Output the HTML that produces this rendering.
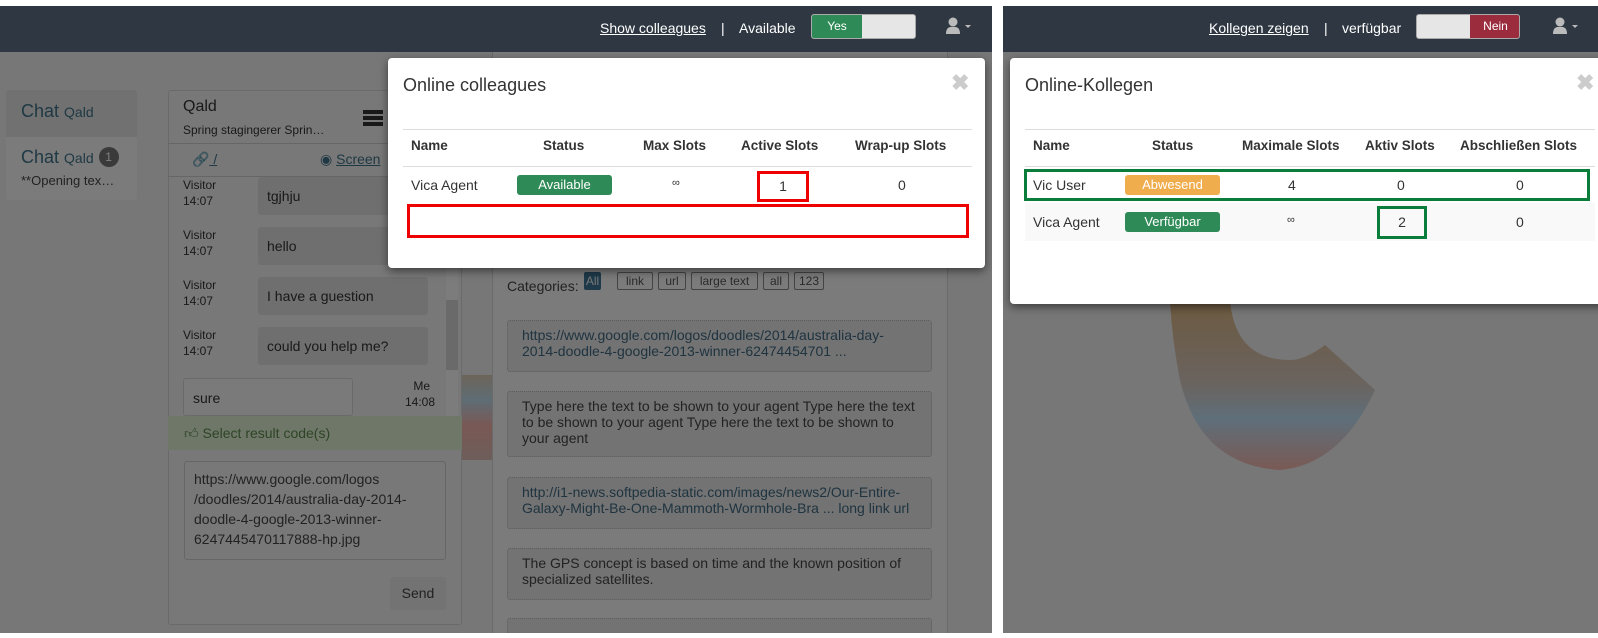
<!DOCTYPE html>
<html><head><meta charset="utf-8"><style>
*{box-sizing:border-box;margin:0;padding:0}
body{width:1598px;height:638px;overflow:hidden;background:#fff;font-family:"Liberation Sans",Arial,sans-serif;font-size:14px;color:#222;position:relative}
.a{position:absolute}
.bar{background:#2e3742;height:46px;top:6px}
.nav{color:#fff;font-size:14px;top:20px}
.nav u{text-decoration:underline}
.pg{background:#eeeeee;top:52px;height:581px;overflow:hidden}
.backdrop{background:rgba(0,0,0,.5);top:52px;height:581px}
.modal{background:#fff;border-radius:4px;box-shadow:0 3px 9px rgba(0,0,0,.5)}
.th{font-weight:bold;font-size:13.5px;color:#333;top:138px}
.td{font-size:14px;color:#333}
.badge{color:#fff;font-size:13px;text-align:center;border-radius:3px;height:20px;line-height:20px}
.lbl{font-size:12px;color:#333;line-height:16px}
.bub{background:#dedede;border-radius:3px;color:#333;font-size:14px;padding-left:9px;line-height:38px;height:38px}
.card{background:#e6e6e6;border:1px dotted #bbb;border-radius:3px;padding:6px 14px;font-size:14px;line-height:16px;left:507px;width:425px;color:#444}
.pill{border:1px solid #888;border-radius:2px;font-size:12px;color:#555;height:18px;line-height:16px;top:220px;text-align:center}
</style></head><body>
<div class="a bar" style="left:0;width:992px"></div>
<div class="a nav" style="left:600px"><u>Show colleagues</u></div>
<div class="a nav" style="left:721px">|</div>
<div class="a nav" style="left:739px">Available</div>
<div class="a" style="left:811px;top:14px;width:105px;height:25px;border-radius:3px;background:#e6e6e6;border:1px solid #aaa;overflow:hidden"><div style="width:50px;height:100%;background:#2e8b57;color:#fff;font-size:12px;text-align:center;line-height:22px">Yes</div></div>
<svg class="a" style="left:944px;top:16px" width="30" height="20"><circle cx="9" cy="6" r="4.5" fill="#bbb"/><path d="M2 18 Q2 10 9 11 Q16 10 16 18Z" fill="#bbb"/><path d="M21 9 L27 9 L24 12Z" fill="#bbb"/></svg>
<div class="a pg" style="left:0;width:992px">
<div class="a" style="left:6px;top:38px;width:131px;height:47px;background:#e2e2e2;border-radius:3px 3px 0 0"></div>
<div class="a" style="left:6px;top:85px;width:131px;height:63px;background:#f6f6f6;border-radius:0 0 3px 3px"></div>
<div class="a" style="left:21px;top:49px;font-size:18px;color:#3e7288">Chat <span style="font-size:14px">Qald</span></div>
<div class="a" style="left:21px;top:95px;font-size:18px;color:#3e7288">Chat <span style="font-size:14px">Qald</span> <span style="display:inline-block;width:20px;height:20px;border-radius:10px;background:#747474;color:#fff;font-size:12px;text-align:center;line-height:20px;vertical-align:2px">1</span></div>
<div class="a" style="left:21px;top:121px;font-size:13px;color:#444">**Opening tex…</div>
<div class="a" style="left:168px;top:38px;width:294px;height:535px;background:#f0f0f0;border:1px solid #d4d4d4;border-radius:3px"></div>
<div class="a" style="left:168px;top:91px;width:294px;height:1px;background:#ccc"></div>
<div class="a" style="left:168px;top:124px;width:294px;height:1px;background:#ccc"></div>
<div class="a" style="left:183px;top:46px;font-size:16px;color:#333">Qald</div>
<div class="a" style="left:183px;top:71px;font-size:12px;color:#333">Spring stagingerer Sprin…</div>
<div class="a" style="left:363px;top:58px;width:20px;height:16px;border-top:4px solid #333;border-bottom:4px solid #333"></div>
<div class="a" style="left:363px;top:64px;width:20px;height:4px;background:#333"></div>
<div class="a" style="left:192px;top:99px;font-size:14px;color:#3e7288">&#128279;<u> /</u></div>
<div class="a" style="left:320px;top:99px;font-size:14px;color:#3e7288">◉ <u>Screen</u></div>
<div class="a lbl" style="left:183px;top:125px">Visitor<br>14:07</div><div class="a bub" style="left:258px;top:125px;width:170px">tgjhju</div>
<div class="a lbl" style="left:183px;top:175px">Visitor<br>14:07</div><div class="a bub" style="left:258px;top:175px;width:170px">hello</div>
<div class="a lbl" style="left:183px;top:225px">Visitor<br>14:07</div><div class="a bub" style="left:258px;top:225px;width:170px">I have a guestion</div>
<div class="a lbl" style="left:183px;top:275px">Visitor<br>14:07</div><div class="a bub" style="left:258px;top:275px;width:170px">could you help me?</div>
<div class="a bub" style="left:183px;top:326px;width:170px;background:#f4f4f4;border:1px solid #d4d4d4">sure</div>
<div class="a lbl" style="left:405px;top:326px;text-align:right;width:25px">Me<br>14:08</div>
<div class="a" style="left:446px;top:125px;width:12px;height:240px;background:#f8f8f8"></div>
<div class="a" style="left:446px;top:248px;width:12px;height:70px;background:#d4d4d4"></div>
<div class="a" style="left:168px;top:364px;width:294px;height:34px;background:#dfeed3"></div>
<div class="a" style="left:184px;top:373px;font-size:14px;color:#5a8a4a">👍︎ Select result code(s)</div>
<div class="a" style="left:184px;top:409px;width:262px;height:99px;border:1px solid #ccc;border-radius:3px;background:#f0f0f0;padding:7px 9px;font-size:14px;line-height:20px;color:#444">https://www.google.com/logos /doodles/2014/australia-day-2014-doodle-4-google-2013-winner-6247445470117888-hp.jpg</div>
<div class="a" style="left:390px;top:525px;width:56px;height:33px;background:#e6e6e6;border-radius:3px;font-size:14px;line-height:33px;text-align:center;color:#444">Send</div>
<div class="a" style="left:462px;top:323px;width:30px;height:85px;background:linear-gradient(#dacab4,#bcdaea 30%,#f4b0aa 60%,#dabcb4)"></div>
<div class="a" style="left:492px;top:0;width:456px;height:581px;background:#f6f6f6;border-left:1px solid #d4d4d4;border-right:1px solid #d4d4d4"></div>
<div class="a" style="left:507px;top:226px;font-size:14px;color:#444">Categories:</div>
<div class="a pill" style="left:584px;width:17px;background:#3c7494;color:#f0f0f0;border-color:#3c7494">All</div>
<div class="a pill" style="left:617px;width:36px">link</div>
<div class="a pill" style="left:658px;width:28px">url</div>
<div class="a pill" style="left:691px;width:67px">large text</div>
<div class="a pill" style="left:763px;width:26px">all</div>
<div class="a pill" style="left:794px;width:30px">123</div>
<div class="a card" style="top:268px;height:52px;color:#3e6880">https://www.google.com/logos/doodles/2014/australia-day-2014-doodle-4-google-2013-winner-62474454701 ...</div>
<div class="a card" style="top:339px;height:66px">Type here the text to be shown to your agent Type here the text to be shown to your agent Type here the text to be shown to your agent</div>
<div class="a card" style="top:425px;height:52px;color:#3e6880">http://i1-news.softpedia-static.com/images/news2/Our-Entire-Galaxy-Might-Be-One-Mammoth-Wormhole-Bra ... long link url</div>
<div class="a card" style="top:496px;height:52px">The GPS concept is based on time and the known position of specialized satellites.</div>
<div class="a card" style="top:566px;height:40px"></div>
</div>
<div class="a backdrop" style="left:0;width:992px"></div>
<div class="a modal" style="left:388px;top:58px;width:597px;height:210px"></div>
<div class="a" style="left:403px;top:75px;font-size:18px;color:#333">Online colleagues</div>
<div class="a" style="left:951px;top:70px;font-size:22px;color:#ccc;font-weight:bold">✖</div>
<div class="a" style="left:403px;top:129px;width:569px;height:1px;background:#ddd"></div>
<div class="a" style="left:403px;top:166px;width:569px;height:1px;background:#ddd"></div>
<div class="a th" style="left:411px">Name</div>
<div class="a th" style="left:543px">Status</div>
<div class="a th" style="left:643px">Max Slots</div>
<div class="a th" style="left:741px">Active Slots</div>
<div class="a th" style="left:855px">Wrap-up Slots</div>
<div class="a td" style="left:411px;top:177px">Vica Agent</div>
<div class="a badge" style="left:517px;top:175px;width:95px;background:#2e8b57">Available</div>
<div class="a td" style="left:672px;top:177px;font-size:11px">∞</div>
<div class="a" style="left:757px;top:171px;width:52px;height:31px;border:3px solid #e00;text-align:center;line-height:25px;color:#333">1</div>
<div class="a td" style="left:898px;top:177px">0</div>
<div class="a" style="left:407px;top:204px;width:562px;height:34px;border:3px solid #e00"></div>
<div class="a" style="left:992px;top:6px;width:11px;height:627px;background:#fff;border-radius:0 0 6px 6px"></div>
<div class="a bar" style="left:1003px;width:595px"></div>
<div class="a nav" style="left:1209px"><u>Kollegen zeigen</u></div>
<div class="a nav" style="left:1324px">|</div>
<div class="a nav" style="left:1342px">verfügbar</div>
<div class="a" style="left:1416px;top:14px;width:104px;height:25px;border-radius:3px;background:#e6e6e6;border:1px solid #aaa;overflow:hidden"><div style="position:absolute;left:53px;width:51px;height:100%;background:#9b2c3e;color:#fff;font-size:12px;text-align:center;line-height:22px">Nein</div></div>
<svg class="a" style="left:1551px;top:16px" width="30" height="20"><circle cx="9" cy="6" r="4.5" fill="#bbb"/><path d="M2 18 Q2 10 9 11 Q16 10 16 18Z" fill="#bbb"/><path d="M21 9 L27 9 L24 12Z" fill="#bbb"/></svg>
<div class="a pg" style="left:1003px;width:595px"></div>
<svg class="a" style="left:1160px;top:300px" width="280" height="175"><defs><linearGradient id="g" x1="0" y1="0" x2="0" y2="1"><stop offset="0" stop-color="#dcb480"/><stop offset=".5" stop-color="#d4c8c0"/><stop offset=".7" stop-color="#bedef4"/><stop offset="1" stop-color="#f4b4aa"/></linearGradient></defs><path d="M10 0 L70 0 Q75 60 130 60 Q145 60 165 45 L215 90 Q180 165 120 170 Q40 165 20 80 Q12 40 10 0Z" fill="url(#g)"/></svg>
<div class="a backdrop" style="left:1003px;width:595px"></div>
<div class="a modal" style="left:1010px;top:58px;width:600px;height:246px"></div>
<div class="a" style="left:1025px;top:75px;font-size:18px;color:#333">Online-Kollegen</div>
<div class="a" style="left:1576px;top:70px;font-size:22px;color:#ccc;font-weight:bold">✖</div>
<div class="a" style="left:1025px;top:129px;width:570px;height:1px;background:#ddd"></div>
<div class="a" style="left:1025px;top:166px;width:570px;height:1px;background:#ddd"></div>
<div class="a th" style="left:1033px">Name</div>
<div class="a th" style="left:1152px">Status</div>
<div class="a th" style="left:1242px">Maximale Slots</div>
<div class="a th" style="left:1365px">Aktiv Slots</div>
<div class="a th" style="left:1460px">Abschließen Slots</div>
<div class="a" style="left:1025px;top:203px;width:570px;height:38px;background:#f9f9f9"></div>
<div class="a" style="left:1024px;top:169px;width:566px;height:32px;border:3px solid #0a7d3b"></div>
<div class="a td" style="left:1033px;top:177px">Vic User</div>
<div class="a badge" style="left:1125px;top:175px;width:95px;background:#f0ad4e">Abwesend</div>
<div class="a td" style="left:1288px;top:177px">4</div>
<div class="a td" style="left:1397px;top:177px">0</div>
<div class="a td" style="left:1516px;top:177px">0</div>
<div class="a td" style="left:1033px;top:214px">Vica Agent</div>
<div class="a badge" style="left:1125px;top:212px;width:95px;background:#2e8b57">Verfügbar</div>
<div class="a td" style="left:1287px;top:214px;font-size:11px">∞</div>
<div class="a" style="left:1377px;top:206px;width:50px;height:33px;border:3px solid #0a7d3b;text-align:center;line-height:27px;color:#333">2</div>
<div class="a td" style="left:1516px;top:214px">0</div>
</body></html>
